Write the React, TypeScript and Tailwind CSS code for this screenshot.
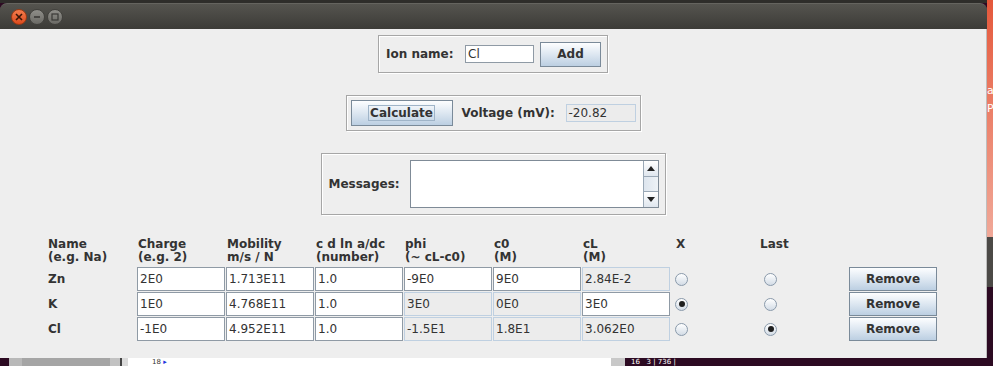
import React from "react";

type Cell = [string, boolean];

const rows: {
  name: string;
  cells: Cell[];
  x: boolean;
  last: boolean;
}[] = [
  {
    name: "Zn",
    cells: [
      ["2E0", true],
      ["1.713E11", true],
      ["1.0", true],
      ["-9E0", true],
      ["9E0", true],
      ["2.84E-2", false],
    ],
    x: false,
    last: false,
  },
  {
    name: "K",
    cells: [
      ["1E0", true],
      ["4.768E11", true],
      ["1.0", true],
      ["3E0", false],
      ["0E0", false],
      ["3E0", true],
    ],
    x: true,
    last: false,
  },
  {
    name: "Cl",
    cells: [
      ["-1E0", true],
      ["4.952E11", true],
      ["1.0", true],
      ["-1.5E1", false],
      ["1.8E1", false],
      ["3.062E0", false],
    ],
    x: false,
    last: true,
  },
];

const headers: [string, string][] = [
  ["Charge", "(e.g. 2)"],
  ["Mobility", "m/s / N"],
  ["c d ln a/dc", "(number)"],
  ["phi", "(~ cL-c0)"],
  ["c0", "(M)"],
  ["cL", "(M)"],
];

function Radio({ on }: { on: boolean }) {
  return (
    <div className="w-[13px] h-[13px] rounded-full border border-[#8a9aab] bg-linear-to-b from-white to-[#d3dce6] flex items-center justify-center">
      {on && <div className="w-[6px] h-[6px] rounded-full bg-[#1f1f1f]" />}
    </div>
  );
}

function Button({ children, className }: { children: React.ReactNode; className: string }) {
  return (
    <div
      className={
        "flex items-center justify-center border border-[#7a8a99] bg-linear-to-b from-[#fdfeff] via-[#dde7f1] to-[#bccfe2] text-[12px] font-bold text-[#333333] " +
        className
      }
    >
      {children}
    </div>
  );
}

function Field({ value, editable }: { value: string; editable: boolean }) {
  return (
    <div
      className={
        "w-[88px] h-[24px] flex items-center pl-[2px] text-[12px] text-[#333333] border " +
        (editable ? "bg-white border-[#8f9aa5]" : "bg-[#ececec] border-[#bfd0e1]")
      }
    >
      {value}
    </div>
  );
}

export default function App() {
  return (
    <div
      className="w-[993px] h-[366px] overflow-hidden flex flex-col bg-[#2c0a22]"
      style={{ fontFamily: '"DejaVu Sans", "Liberation Sans", sans-serif' }}
    >
      <div className="flex h-[358px]">
        {/* Window */}
        <div className="w-[987px] flex flex-col">
          <div className="h-[3px] bg-[#2e2d2a]" />
          <div className="h-[26px] rounded-t-[7px] bg-linear-to-b from-[#55544f] to-[#3c3b37] border-t border-[#65645f] flex items-center gap-[2px] pl-[11px]">
            <div className="w-[16px] h-[16px] rounded-full bg-linear-to-b from-[#f47c4c] to-[#dd4a1c] border border-[#9c3a14] flex items-center justify-center">
              <svg width="8" height="8" viewBox="0 0 8 8">
                <path d="M1 1L7 7M7 1L1 7" stroke="#3a1608" strokeWidth="1.6" />
              </svg>
            </div>
            <div className="w-[16px] h-[16px] rounded-full bg-linear-to-b from-[#8f8e89] to-[#6b6a65] border border-[#42413d] flex items-center justify-center">
              <svg width="8" height="8" viewBox="0 0 8 8">
                <path d="M1 4H7" stroke="#3a3936" strokeWidth="1.6" />
              </svg>
            </div>
            <div className="w-[16px] h-[16px] rounded-full bg-linear-to-b from-[#8f8e89] to-[#6b6a65] border border-[#42413d] flex items-center justify-center">
              <svg width="8" height="8" viewBox="0 0 8 8">
                <rect x="1" y="1" width="6" height="6" fill="none" stroke="#3a3936" strokeWidth="1.2" />
              </svg>
            </div>
          </div>

          {/* Content */}
          <div className="flex-1 bg-[#eeeeee] border-r border-[#bdbdbd] flex flex-col items-center pt-[6px] text-[#333333]">
            {/* Ion name panel */}
            <div className="w-[230px] h-[38px] flex items-center border border-[#a6a6a6] shadow-[inset_1px_1px_0_#ffffff,1px_1px_0_#ffffff] pl-[7px]">
              <span className="text-[12px] font-bold w-[79px]">Ion name:</span>
              <div className="w-[69px] h-[18px] bg-white border border-[#8f9aa5] text-[12px] pl-[2px] flex items-center">
                Cl
              </div>
              <Button className="w-[61px] h-[25px] ml-[6px]">Add</Button>
            </div>

            {/* Calculate panel */}
            <div className="mt-[22px] w-[295px] h-[36px] flex items-center border border-[#a6a6a6] shadow-[inset_1px_1px_0_#ffffff,1px_1px_0_#ffffff] pl-[4px]">
              <Button className="w-[102px] h-[26px]">
                <span className="border border-[#9fb4c8] px-[1px] leading-[14px]">Calculate</span>
              </Button>
              <span className="ml-[9px] text-[12px] font-bold w-[104px]">Voltage (mV):</span>
              <div className="w-[70px] h-[18px] bg-[#ececec] border border-[#bfd0e1] text-[12px] pl-[2px] flex items-center">
                -20.82
              </div>
            </div>

            {/* Messages panel */}
            <div className="mt-[22px] w-[345px] h-[62px] flex items-center border border-[#a6a6a6] shadow-[inset_1px_1px_0_#ffffff,1px_1px_0_#ffffff] pl-[7px]">
              <span className="text-[12px] font-bold w-[81px]">Messages:</span>
              <div className="w-[249px] h-[48px] bg-white border border-[#7f8b97] flex justify-end">
                <div className="w-[15px] h-full border-l border-[#9aa8b6] flex flex-col bg-[#eeeeee]">
                  <div className="h-[16px] flex items-center justify-center bg-linear-to-b from-white to-[#dfe6ee] border-b border-[#9aa8b6]">
                    <svg width="8" height="5" viewBox="0 0 8 5">
                      <path d="M0 5L4 0L8 5Z" fill="#222" />
                    </svg>
                  </div>
                  <div className="flex-1 bg-linear-to-r from-[#dde5ee] to-[#eef2f6] border-b border-[#9aa8b6]" />
                  <div className="h-[15px] flex items-center justify-center bg-linear-to-b from-white to-[#dfe6ee]">
                    <svg width="8" height="5" viewBox="0 0 8 5">
                      <path d="M0 0L4 5L8 0Z" fill="#222" />
                    </svg>
                  </div>
                </div>
              </div>
            </div>

            {/* Table */}
            <div className="self-start ml-[48px] mt-[23px] flex flex-col text-[12px]">
              <div className="flex leading-[13px] font-bold h-[29px]">
                <div className="w-[89px]">
                  <div>Name</div>
                  <div>(e.g. Na)</div>
                </div>
                {headers.map(([a, b]) => (
                  <div key={a} className="w-[89px] pl-[1px]">
                    <div>{a}</div>
                    <div>{b}</div>
                  </div>
                ))}
                <div className="w-[89px] pl-[5px]">X</div>
                <div className="w-[89px]">Last</div>
              </div>
              {rows.map((r) => (
                <div key={r.name} className="flex items-center h-[24px] mb-[1px]">
                  <div className="w-[89px] font-bold">{r.name}</div>
                  {r.cells.map(([v, e], i) => (
                    <div key={i} className="w-[89px]">
                      <Field value={v} editable={e} />
                    </div>
                  ))}
                  <div className="w-[89px] pl-[4px]">
                    <Radio on={r.x} />
                  </div>
                  <div className="w-[89px] pl-[4px]">
                    <Radio on={r.last} />
                  </div>
                  <Button className="w-[88px] h-[24px]">Remove</Button>
                </div>
              ))}
            </div>
          </div>
        </div>

        {/* Desktop edge */}
        <div className="flex-1 flex flex-col overflow-hidden">
          <div className="h-[237px] bg-linear-to-b from-[#e4573a] to-[#f0a898] text-white text-[11px] leading-[18px] pt-[82px]">
            <div>a</div>
            <div>P</div>
          </div>
          <div className="h-[50px] bg-[#4b4946]" />
          <div className="flex-1 bg-[#2c0a22]" />
        </div>
      </div>

      {/* Bottom strip from windows behind */}
      <div className="h-[8px] flex">
        <div className="w-[9px] bg-[#2c0a22]" />
        <div className="w-[13px] bg-[#b8b8b8]" />
        <div className="w-[88px] bg-[#a5a5a5]" />
        <div className="w-[10px] bg-[#c2c2c2]" />
        <div className="w-[2px] bg-[#444444]" />
        <div className="w-[6px] bg-[#dadada]" />
        <div className="w-[483px] bg-white text-[7px] leading-[8px] pl-[24px] text-[#333]">
          18 <span className="text-[#2233dd]">▸</span>
        </div>
        <div className="w-[14px] bg-[#c8c8c8]" />
        <div className="flex-1 bg-[#2c0a22] text-white text-[7px] leading-[8px] pl-[6px]">
          16 &nbsp; 3 | 736 |
        </div>
      </div>
    </div>
  );
}
